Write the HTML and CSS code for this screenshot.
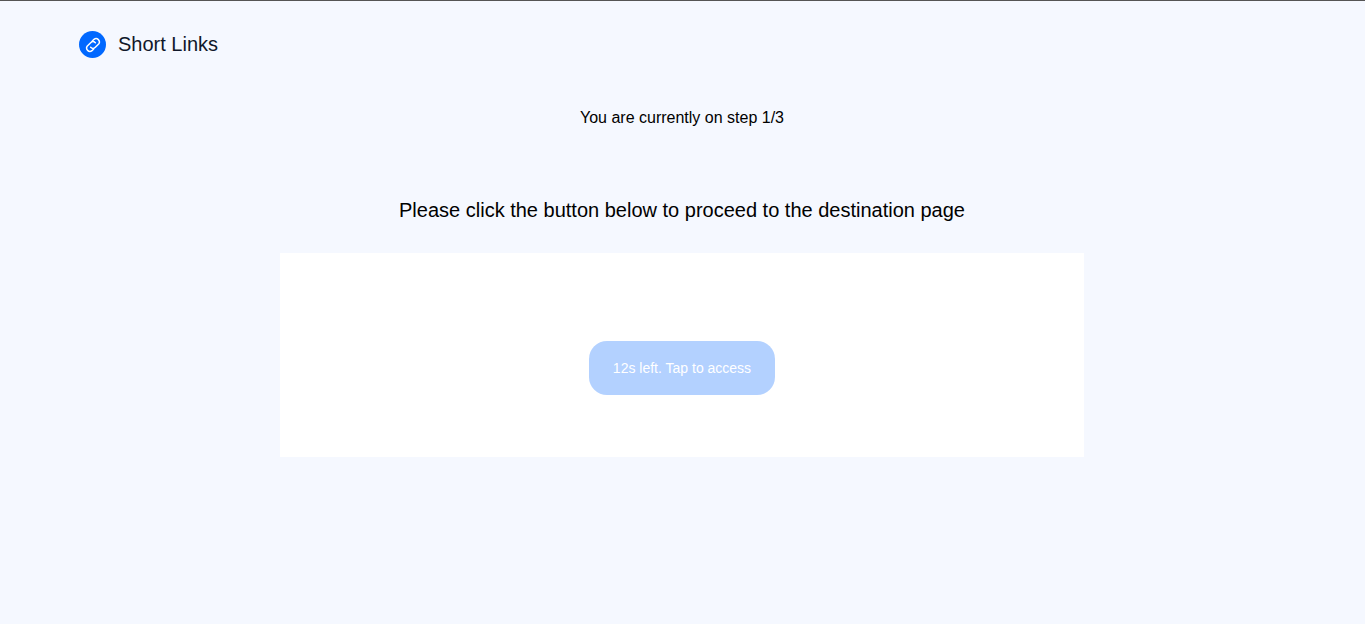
FILE: index.html
```html
<!DOCTYPE html>
<html lang="en">
<head>
<meta charset="utf-8">
<title>Short Links</title>
<link rel="stylesheet" href="styles.css">
</head>
<body>
<div class="page">
  <header class="header">
    <span class="logo">
      <svg width="16" height="16" viewBox="0 0 24 24" fill="none" stroke="#fff" stroke-width="2.2" stroke-linecap="round" stroke-linejoin="round">
        <path d="M11 6l2.5-2.5a5 5 0 0 1 7 7l-5 5a5 5 0 0 1-7 0"/>
        <path d="M13 18l-2.500 2.500a5 5 0 0 1-7-7l5-5a5 5 0 0 1 7 0"/>
      </svg>
    </span>
    <span class="brand">Short Links</span>
  </header>
  <p class="step">You are currently on step 1/3</p>
  <h1 class="title">Please click the button below to proceed to the destination page</h1>
  <section class="card">
    <button class="access" type="button">12s left. Tap to access</button>
  </section>
</div>
</body>
</html>
```
FILE: styles.css
```css
html, body {
  margin: 0;
  padding: 0;
  background: #fff;
}
body {
  font-family: "Liberation Sans", Arial, sans-serif;
  overflow: hidden;
}
.page {
  box-sizing: border-box;
  height: 624px;
  background: #f5f8ff;
  border-top: 1px solid #555;
  padding-right: 1px;
  display: flex;
  flex-direction: column;
  align-items: center;
}
.header {
  align-self: stretch;
  display: flex;
  align-items: center;
  gap: 12px;
  padding: 30px 0 0 79px;
  height: 27px;
}
.logo {
  width: 27px;
  height: 27px;
  border-radius: 50%;
  background: #0068ff;
  display: flex;
  align-items: center;
  justify-content: center;
}
.brand {
  font-size: 20px;
  line-height: 27px;
  color: #10172a;
}
.step {
  margin: 50px 0 0;
  font-size: 16px;
  line-height: 20px;
  color: #000;
}
.title {
  margin: 70px 0 0;
  font-size: 20px;
  line-height: 24px;
  font-weight: 400;
  color: #000;
}
.card {
  box-sizing: border-box;
  width: 804px;
  height: 204px;
  margin-top: 31px;
  background: #fff;
  display: flex;
  justify-content: center;
  padding-top: 88px;
}
.access {
  width: 186px;
  height: 54px;
  padding: 0;
  border: 0;
  border-radius: 18px;
  background: #b3d1ff;
  color: #fff;
  font-family: inherit;
  font-size: 14px;
}
```
